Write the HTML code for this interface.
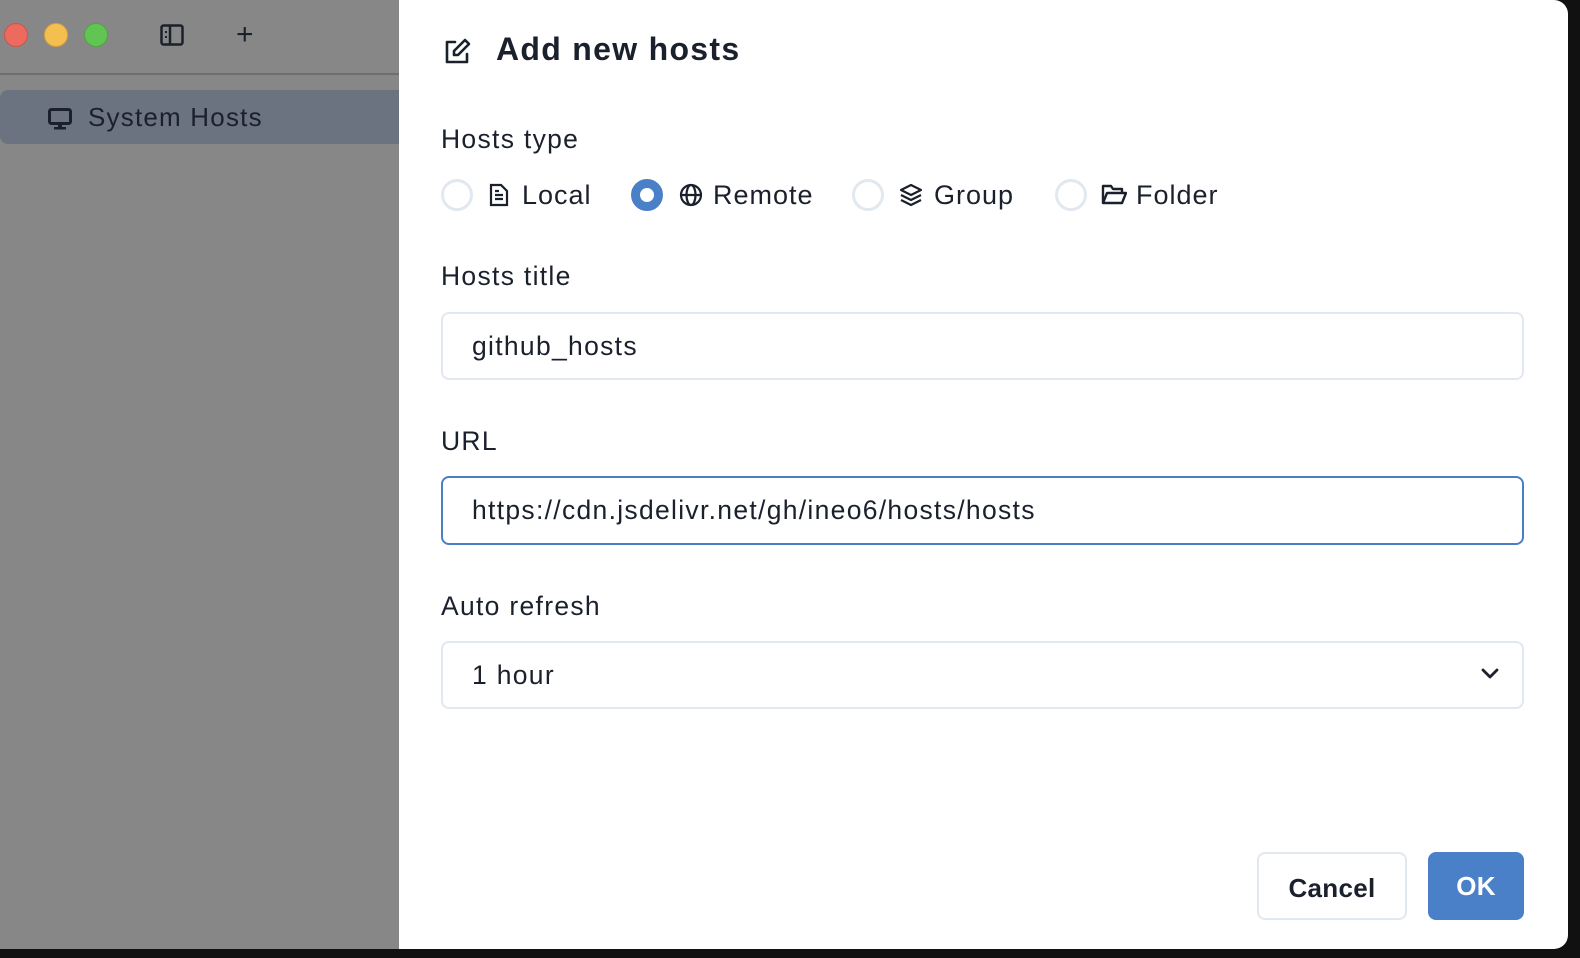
<!DOCTYPE html>
<html><head><meta charset="utf-8"><style>
*{box-sizing:border-box;margin:0;padding:0}
body{width:1580px;height:958px;background:#111;font-family:"Liberation Sans",sans-serif;color:#1a202c;position:relative;overflow:hidden;letter-spacing:0.9px}
.left{position:absolute;left:0;top:0;width:420px;height:949px;background:#878787}
.tb{position:absolute;left:0;top:73px;width:400px;height:2px;background:#6e6e6e}
.dot{position:absolute;top:23px;width:24px;height:24px;border-radius:50%}
.item{position:absolute;left:0;top:90px;width:400px;height:54px;background:#6b7280;border-radius:8px 0 0 8px}
.item span{position:absolute;left:88px;top:12px;font-size:26px;color:#1a202c;letter-spacing:1.2px}
.dlg{position:absolute;left:399px;top:0;width:1169px;height:949px;background:#fff;border-radius:0 14px 14px 0}
.abs{position:absolute}
.lbl{position:absolute;left:42px;font-size:26.5px;color:#1a202c;letter-spacing:1.3px}
.inp{position:absolute;left:42px;width:1083px;height:68px;border:2px solid #e2e8f0;border-radius:8px;font-size:26.5px;padding-left:29px;line-height:64px;letter-spacing:1.3px}
.radio{position:absolute;top:179px;width:32px;height:32px;border-radius:50%;border:3px solid #e2e8f0}
.rt{position:absolute;top:179px;font-size:27px;line-height:32px;letter-spacing:1px}
.btn{position:absolute;top:852px;height:68px;border-radius:8px;font-size:26px;font-weight:bold;text-align:center;line-height:68px;letter-spacing:0.3px}
</style></head><body>
<div class="left">
<div class="dot" style="left:4px;background:#ec6a5e;border:1px solid #d0524a"></div>
<div class="dot" style="left:44px;background:#f4bf4f;border:1px solid #d8a33c"></div>
<div class="dot" style="left:84px;background:#61c554;border:1px solid #4ea63f"></div>
<svg class="abs" style="left:160px;top:24px" width="24" height="22" viewBox="0 0 24 22"><rect x="1.5" y="1.5" width="21" height="19" rx="2" fill="none" stroke="#1a202c" stroke-width="2.5"/><line x1="10" y1="2" x2="10" y2="20" stroke="#1a202c" stroke-width="2.5"/><rect x="5" y="7" width="2" height="2" fill="#1a202c"/><rect x="5" y="12" width="2" height="2" fill="#1a202c"/></svg>
<div class="abs" style="left:236px;top:18px;font-size:30px;color:#1a202c">+</div>
<div class="tb"></div>
<div class="item"><svg class="abs" style="left:48px;top:18px" width="24" height="22" viewBox="0 0 24 22"><rect x="1.5" y="1.5" width="21" height="14" rx="2" fill="none" stroke="#1a202c" stroke-width="3"/><rect x="10" y="15" width="4" height="4" fill="#1a202c"/><rect x="6" y="19" width="12" height="2.5" fill="#1a202c"/></svg><span>System Hosts</span></div>
</div>
<div class="dlg">
<svg class="abs" style="left:44px;top:37px" width="30" height="28" viewBox="0 0 30 28" fill="none" stroke="#1a202c" stroke-width="2.6" stroke-linejoin="round" stroke-linecap="round"><path d="M12 5H4v20h20v-8"/><path d="M22 3l4 4-11 11h-4v-4z"/></svg>
<div class="abs" style="left:97px;top:31px;font-size:32px;font-weight:bold;letter-spacing:1.3px">Add new hosts</div>
<div class="lbl" style="top:124px">Hosts type</div>
<div class="radio" style="left:42px"></div>
<svg class="abs" style="left:90px;top:183px" width="20" height="24" viewBox="0 0 20 24" fill="none" stroke="#1a202c" stroke-width="2.2"><path d="M2 2h10l6 6v14H2z"/><path d="M6 12h8M6 16h8M6 8h4"/></svg>
<div class="rt" style="left:123px">Local</div>
<div class="radio" style="left:232px;border:9px solid #4a80c8"></div>
<svg class="abs" style="left:280px;top:183px" width="24" height="24" viewBox="0 0 24 24" fill="none" stroke="#1a202c" stroke-width="2.2"><circle cx="12" cy="12" r="10"/><ellipse cx="12" cy="12" rx="4.5" ry="10"/><path d="M2 12h20"/></svg>
<div class="rt" style="left:314px">Remote</div>
<div class="radio" style="left:453px"></div>
<svg class="abs" style="left:500px;top:183px" width="24" height="24" viewBox="0 0 24 24" fill="none" stroke="#1a202c" stroke-width="2.2" stroke-linejoin="round"><path d="M12 2l10 5-10 5L2 7z"/><path d="M2 12l10 5 10-5"/><path d="M2 17l10 5 10-5"/></svg>
<div class="rt" style="left:535px">Group</div>
<div class="radio" style="left:656px"></div>
<svg class="abs" style="left:702px;top:184px" width="26" height="22" viewBox="0 0 26 22" fill="none" stroke="#1a202c" stroke-width="2.4" stroke-linejoin="round"><path d="M2 19V2h8l2 3h9v4"/><path d="M2 19l4-10h19l-4 10z"/></svg>
<div class="rt" style="left:737px">Folder</div>
<div class="lbl" style="top:261px">Hosts title</div>
<div class="inp" style="top:312px">github_hosts</div>
<div class="lbl" style="top:426px">URL</div>
<div class="inp" style="top:476px;border:2px solid #4a7fc8;height:69px">https://cdn.jsdelivr.net/gh/ineo6/hosts/hosts</div>
<div class="lbl" style="top:591px">Auto refresh</div>
<div class="inp" style="top:641px">1 hour</div>
<svg class="abs" style="left:1082px;top:668px" width="18" height="12" viewBox="0 0 18 12" fill="none" stroke="#1a202c" stroke-width="2.8" stroke-linecap="round" stroke-linejoin="round"><path d="M2 2l7 7 7-7"/></svg>
<div class="btn" style="left:858px;width:150px;border:2px solid #e2e8f0">Cancel</div>
<div class="btn" style="left:1029px;width:96px;background:#4a80c8;color:#fff">OK</div>
</div>
</body></html>
